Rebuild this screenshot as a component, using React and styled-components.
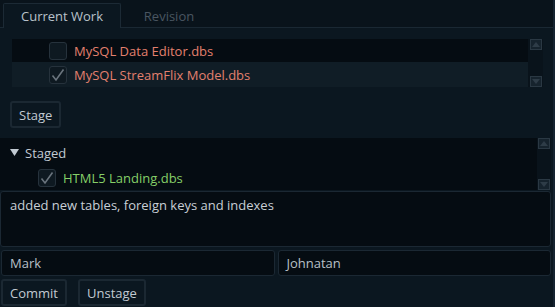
import React from 'react'
import styled, { createGlobalStyle } from 'styled-components';

const GlobalStyle = createGlobalStyle`
  html, body {
    margin: 0;
    padding: 0;
    background: #0a151e;
  }
  * {
    box-sizing: border-box;
  }
`;

const Window = styled.div`
  width: 555px;
  height: 307px;
  background: #0a151e;
  font-family: "Open Sans", "Noto Sans", sans-serif;
  font-size: 13px;
  color: #c5ccd3;
  display: flex;
  flex-direction: column;
  border-right: 2px solid #152330;
  overflow: hidden;
`;

const TabBar = styled.div`
  height: 28px;
  display: flex;
  align-items: flex-end;
  padding-left: 3px;
  background: #09131b;
  border-bottom: 1px solid #1a2833;
`;

const Tab = styled.div`
  height: 25px;
  width: ${p => p.$width}px;
  display: flex;
  align-items: center;
  justify-content: center;
  color: ${p => (p.$active ? '#b9c2cb' : '#4a5661')};
  background: ${p => (p.$active ? '#0b1720' : 'transparent')};
  border: 1px solid ${p => (p.$active ? '#1c2a35' : 'transparent')};
  border-bottom: none;
  margin-bottom: -1px;
  border-radius: 2px 2px 0 0;
`;

const Pane = styled.div`
  flex: 1;
  display: flex;
  flex-direction: column;
  background: #0b1720;
`;

const ListBox = styled.div`
  display: flex;
  margin: ${p => p.$margin};
  height: ${p => p.$height}px;
  background: #050c12;
`;

const Rows = styled.div`
  flex: 1;
  display: flex;
  flex-direction: column;
`;

const Row = styled.div`
  height: ${p => p.$height}px;
  display: flex;
  align-items: center;
  padding-left: ${p => p.$indent}px;
  gap: 7px;
  background: ${p => (p.$selected ? '#101d26' : 'transparent')};
`;

const Check = styled.div`
  width: 18px;
  height: 18px;
  border: 1px solid #26323c;
  border-radius: 3px;
  background: #0e1921;
  display: flex;
  align-items: center;
  justify-content: center;
`;

const FileName = styled.span`
  color: ${p => p.$color};
`;

const ScrollCol = styled.div`
  width: ${p => p.$width}px;
  display: flex;
  flex-direction: column;
  justify-content: space-between;
  align-items: center;
  background: #09131b;
`;

const ArrowBtn = styled.div`
  width: 12px;
  height: 11px;
  border: 1px solid #2a3843;
  background: #16232d;
  display: flex;
  align-items: center;
  justify-content: center;
`;

const Toolbar = styled.div`
  height: ${p => p.$height}px;
  display: flex;
  align-items: flex-start;
  gap: 11px;
  padding: ${p => p.$pad};
`;

const Button = styled.div`
  height: 27px;
  padding: 0 7px;
  display: flex;
  align-items: center;
  border: 2px solid #1b2832;
  border-radius: 3px;
  background: #0b1720;
  color: #c2cad2;
`;

const Header = styled.div`
  height: 30px;
  display: flex;
  align-items: center;
  padding-left: 10px;
  gap: 6px;
  color: #c2cad2;
`;

const TextArea = styled.div`
  height: 56px;
  margin: 1px 2px 0 0;
  border: 1px solid #1b2833;
  border-radius: 3px;
  background: #050c12;
  padding: 4px 9px;
  color: #c8cfd6;
`;

const Inputs = styled.div`
  display: flex;
  gap: 3px;
  padding: 3px 2px 0 1px;
`;

const Input = styled.div`
  flex: 1;
  height: 26px;
  border: 1px solid #1b2833;
  border-radius: 3px;
  background: #050c12;
  display: flex;
  align-items: center;
  padding-left: 8px;
  color: #b8c0c8;
`;

const Tick = () => (
  <svg width="16" height="16" viewBox="0 0 16 16">
    <path d="M2.5 8.5 L6 13 L13.5 2.5" fill="none" stroke="#6a747d" strokeWidth="1.6" />
  </svg>
);

const Up = () => (
  <svg width="8" height="5" viewBox="0 0 8 5"><path d="M0 5 L4 0 L8 5Z" fill="#2e3c47" /></svg>
);
const Down = () => (
  <svg width="8" height="5" viewBox="0 0 8 5"><path d="M0 0 L4 5 L8 0Z" fill="#2e3c47" /></svg>
);

export default function App() {
  return (
    <Window>
      <GlobalStyle />
      <TabBar>
        <Tab $active $width={118}>Current Work</Tab>
        <Tab $width={96}>Revision</Tab>
      </TabBar>
      <Pane>
        <ListBox $margin="11px 10px 0 12px" $height={48}>
          <Rows>
            <Row $height={23} $indent={37}>
              <Check />
              <FileName $color="#e3806e">MySQL Data Editor.dbs</FileName>
            </Row>
            <Row $height={25} $indent={37} $selected>
              <Check><Tick /></Check>
              <FileName $color="#e3806e">MySQL StreamFlix Model.dbs</FileName>
            </Row>
          </Rows>
          <ScrollCol $width={15}>
            <ArrowBtn><Up /></ArrowBtn>
            <ArrowBtn><Down /></ArrowBtn>
          </ScrollCol>
        </ListBox>
        <Toolbar $height={51} $pad="14px 0 0 10px">
          <Button>Stage</Button>
        </Toolbar>
        <ListBox $margin="0 2px 0 0" $height={52}>
          <Rows>
            <Header>
              <svg width="9" height="8" viewBox="0 0 9 8"><path d="M0 0 L9 0 L4.5 7Z" fill="#c2cad2" /></svg>
              Staged
            </Header>
            <Row $height={20} $indent={38}>
              <Check><Tick /></Check>
              <FileName $color="#86cf68">HTML5 Landing.dbs</FileName>
            </Row>
          </Rows>
          <ScrollCol $width={14}>
            <ArrowBtn><Up /></ArrowBtn>
            <ArrowBtn><Down /></ArrowBtn>
          </ScrollCol>
        </ListBox>
        <TextArea>added new tables, foreign keys and indexes</TextArea>
        <Inputs>
          <Input>Mark</Input>
          <Input>Johnatan</Input>
        </Inputs>
        <Toolbar $height={31} $pad="3px 0 0 1px">
          <Button>Commit</Button>
          <Button>Unstage</Button>
        </Toolbar>
      </Pane>
    </Window>
  );
}
